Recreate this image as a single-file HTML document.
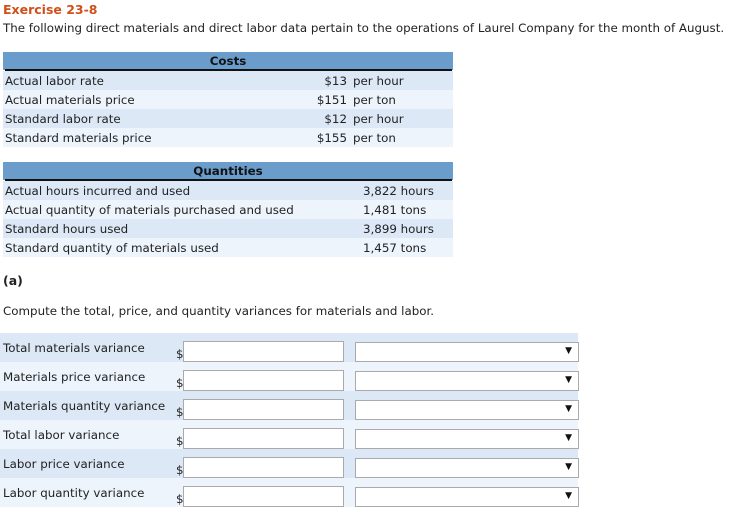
<!DOCTYPE html><html><head><style>
body{margin:0;width:736px;height:512px;background:#fff;font-family:"DejaVu Sans","Liberation Sans",sans-serif;font-size:11.85px;color:#222;position:relative;overflow:hidden}
.a{position:absolute;white-space:nowrap}
.r{position:absolute;left:3px;width:450px;height:19px}
.d{background:#dce8f6}.l{background:#edf4fc}
.h{position:absolute;left:3px;width:450px;height:18px;background:#6a9dcc;font-weight:bold;text-align:center;line-height:19px;color:#111}
.h:after{content:"";position:absolute;left:2px;right:1px;bottom:-1px;height:2px;background:#111}
.t{position:absolute;left:2px;top:3px}
.r .a{top:3px !important}
.fr{position:absolute;left:0;width:578px;height:29px}
.in{position:absolute;left:183px;top:8px;width:159px;height:19px;border:1px solid #aaa;background:#fff}
.se{position:absolute;left:355px;top:9px;width:222px;height:18px;border:1px solid #aaa;background:#fff}
.se:after{content:"▼";position:absolute;right:6px;top:3px;font-size:9px;color:#111}
.ds{position:absolute;left:176px;top:14px}
</style></head><body>
<div class="a" style="left:3px;top:2px;color:#d0501a;font-weight:bold;font-size:12.5px">Exercise 23-8</div>
<div class="a" style="left:3px;top:21px">The following direct materials and direct labor data pertain to the operations of Laurel Company for the month of August.</div>

<div class="h" style="top:52px">Costs</div>
<div class="r d" style="top:71px"><span class="t">Actual labor rate</span><span class="a" style="right:106px">$13</span><span class="a" style="left:350px">per hour</span></div>
<div class="r l" style="top:90px"><span class="t">Actual materials price</span><span class="a" style="right:106px">$151</span><span class="a" style="left:350px">per ton</span></div>
<div class="r d" style="top:109px"><span class="t">Standard labor rate</span><span class="a" style="right:106px">$12</span><span class="a" style="left:350px">per hour</span></div>
<div class="r l" style="top:128px"><span class="t">Standard materials price</span><span class="a" style="right:106px">$155</span><span class="a" style="left:350px">per ton</span></div>

<div class="h" style="top:162px">Quantities</div>
<div class="r d" style="top:181px"><span class="t">Actual hours incurred and used</span><span class="a" style="left:360px">3,822 hours</span></div>
<div class="r l" style="top:200px"><span class="t">Actual quantity of materials purchased and used</span><span class="a" style="left:360px">1,481 tons</span></div>
<div class="r d" style="top:219px"><span class="t">Standard hours used</span><span class="a" style="left:360px">3,899 hours</span></div>
<div class="r l" style="top:238px"><span class="t">Standard quantity of materials used</span><span class="a" style="left:360px">1,457 tons</span></div>

<div class="a" style="left:3px;top:273px;font-weight:bold;font-size:12.5px">(a)</div>
<div class="a" style="left:3px;top:304px">Compute the total, price, and quantity variances for materials and labor.</div>

<div class="fr d" style="top:333px"><span class="a" style="left:3px;top:8px">Total materials variance</span><span class="ds">$</span><div class="in"></div><div class="se"></div></div>
<div class="fr l" style="top:362px"><span class="a" style="left:3px;top:8px">Materials price variance</span><span class="ds">$</span><div class="in"></div><div class="se"></div></div>
<div class="fr d" style="top:391px"><span class="a" style="left:3px;top:8px">Materials quantity variance</span><span class="ds">$</span><div class="in"></div><div class="se"></div></div>
<div class="fr l" style="top:420px"><span class="a" style="left:3px;top:8px">Total labor variance</span><span class="ds">$</span><div class="in"></div><div class="se"></div></div>
<div class="fr d" style="top:449px"><span class="a" style="left:3px;top:8px">Labor price variance</span><span class="ds">$</span><div class="in"></div><div class="se"></div></div>
<div class="fr l" style="top:478px"><span class="a" style="left:3px;top:8px">Labor quantity variance</span><span class="ds">$</span><div class="in"></div><div class="se"></div></div>
</body></html>
